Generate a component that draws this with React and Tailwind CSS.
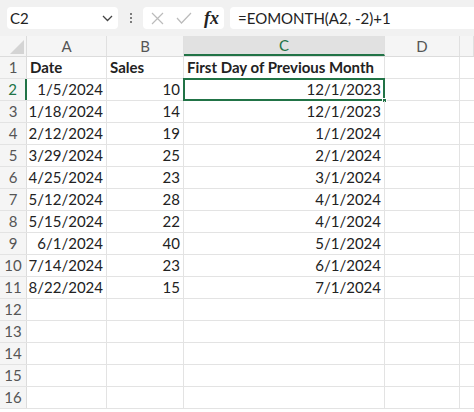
import React from 'react';

const rows = [
  ['Date', 'Sales', 'First Day of Previous Month'],
  ['1/5/2024', '10', '12/1/2023'],
  ['1/18/2024', '14', '12/1/2023'],
  ['2/12/2024', '19', '1/1/2024'],
  ['3/29/2024', '25', '2/1/2024'],
  ['4/25/2024', '23', '3/1/2024'],
  ['5/12/2024', '28', '4/1/2024'],
  ['5/15/2024', '22', '4/1/2024'],
  ['6/1/2024', '40', '5/1/2024'],
  ['7/14/2024', '23', '6/1/2024'],
  ['8/22/2024', '15', '7/1/2024'],
  ['', '', ''], ['', '', ''], ['', '', ''], ['', '', ''], ['', '', ''],
];

const cols = [
  { name: 'A', w: 'w-[80px]' },
  { name: 'B', w: 'w-[77px]' },
  { name: 'C', w: 'w-[201px]' },
  { name: 'D', w: 'w-[75px]' },
  { name: '', w: 'flex-1' },
];

export default function App() {
  return (
    <div className="w-[474px] h-[412px] overflow-hidden bg-white text-[#222]" style={{ fontFamily: 'Lato, "Open Sans", sans-serif' }}>
      {/* formula bar */}
      <div className="h-[36px] bg-[#f1f1f1] flex items-center pl-[7px] gap-[6px]">
        <div className="w-[111px] h-[22px] bg-white rounded-[4px] flex items-center justify-between pl-[3px] pr-[5px] text-[15px]">
          <span>C2</span>
          <svg width="11" height="7" viewBox="0 0 11 7" fill="none" stroke="#444" strokeWidth="1.3"><path d="M1 1l4.5 4.5L10 1" /></svg>
        </div>
        <div className="w-[13px] flex flex-col items-center gap-[2px]">
          <span className="w-[2px] h-[2px] bg-[#555] rounded-full" />
          <span className="w-[2px] h-[2px] bg-[#555] rounded-full" />
          <span className="w-[2px] h-[2px] bg-[#555] rounded-full" />
        </div>
        <div className="w-[81px] h-[22px] bg-white rounded-[4px] flex items-center pl-[8px] gap-[12px]">
          <svg width="13" height="13" viewBox="0 0 13 13" stroke="#bbb" strokeWidth="1.2"><path d="M1 1l11 11M12 1L1 12" /></svg>
          <svg width="16" height="12" viewBox="0 0 16 12" fill="none" stroke="#bbb" strokeWidth="1.2"><path d="M1 6l4.5 5L15 1" /></svg>
          <span className="text-[18px] italic font-bold leading-none" style={{ fontFamily: '"Liberation Serif", serif' }}>fx</span>
        </div>
        <div className="flex-1 h-[22px] bg-white rounded-l-[4px] flex items-center pl-[8px] text-[15px]">
          =EOMONTH(A2, -2)+1
        </div>
      </div>

      {/* column headers */}
      <div className="flex h-[21px] bg-[#f5f5f5] border-b border-[#dcdcdc]">
        <div className="w-[27px] border-r border-[#dcdcdc] relative overflow-hidden">
          <div className="absolute right-[2px] bottom-[2px] w-0 h-0 border-l-[14px] border-l-transparent border-b-[14px] border-b-[#d4d4d4]" />
        </div>
        {cols.map((c, idx) => (
          <div
            key={idx}
            className={`${c.w} flex items-center justify-center text-[15px] border-r border-[#e0e0e0] ${c.name === 'C' ? 'bg-[#e1e1e1] text-[#217346] border-b-2 border-b-[#217346]' : 'text-[#555]'}`}
          >
            {c.name}
          </div>
        ))}
      </div>

      {/* rows */}
      {rows.map((r, i) => (
        <div key={i} className="flex h-[22px] border-b border-[#e3e3e3]">
          <div className={`w-[27px] flex items-center justify-center text-[15px] bg-[#f5f5f5] border-r ${i === 1 ? 'bg-[#e1e1e1] text-[#217346] border-r-2 border-r-[#217346]' : 'text-[#555] border-r-[#dcdcdc]'}`}>
            {i + 1}
          </div>
          <div className={`w-[80px] flex items-center px-[3px] text-[15px] border-r border-[#e3e3e3] ${i === 0 ? 'font-bold justify-start' : 'justify-end'}`}>{r[0]}</div>
          <div className={`w-[77px] flex items-center px-[3px] text-[15px] border-r border-[#e3e3e3] ${i === 0 ? 'font-bold justify-start' : 'justify-end'}`}>{r[1]}</div>
          <div className={`w-[201px] flex items-center px-[3px] text-[15px] border-r border-[#e3e3e3] relative ${i === 0 ? 'font-bold justify-start' : 'justify-end'}`}>
            {r[2]}
            {i === 1 && (
              <>
                <div className="absolute left-[-1px] top-[-1px] right-[-1px] bottom-[-1px] border-2 border-[#217346]" />
                <div className="absolute right-[-3px] bottom-[-3px] w-[5px] h-[5px] bg-[#217346] border border-white" />
              </>
            )}
          </div>
          <div className="w-[75px] border-r border-[#e3e3e3]" />
          <div className="flex-1" />
        </div>
      ))}
    </div>
  );
}
